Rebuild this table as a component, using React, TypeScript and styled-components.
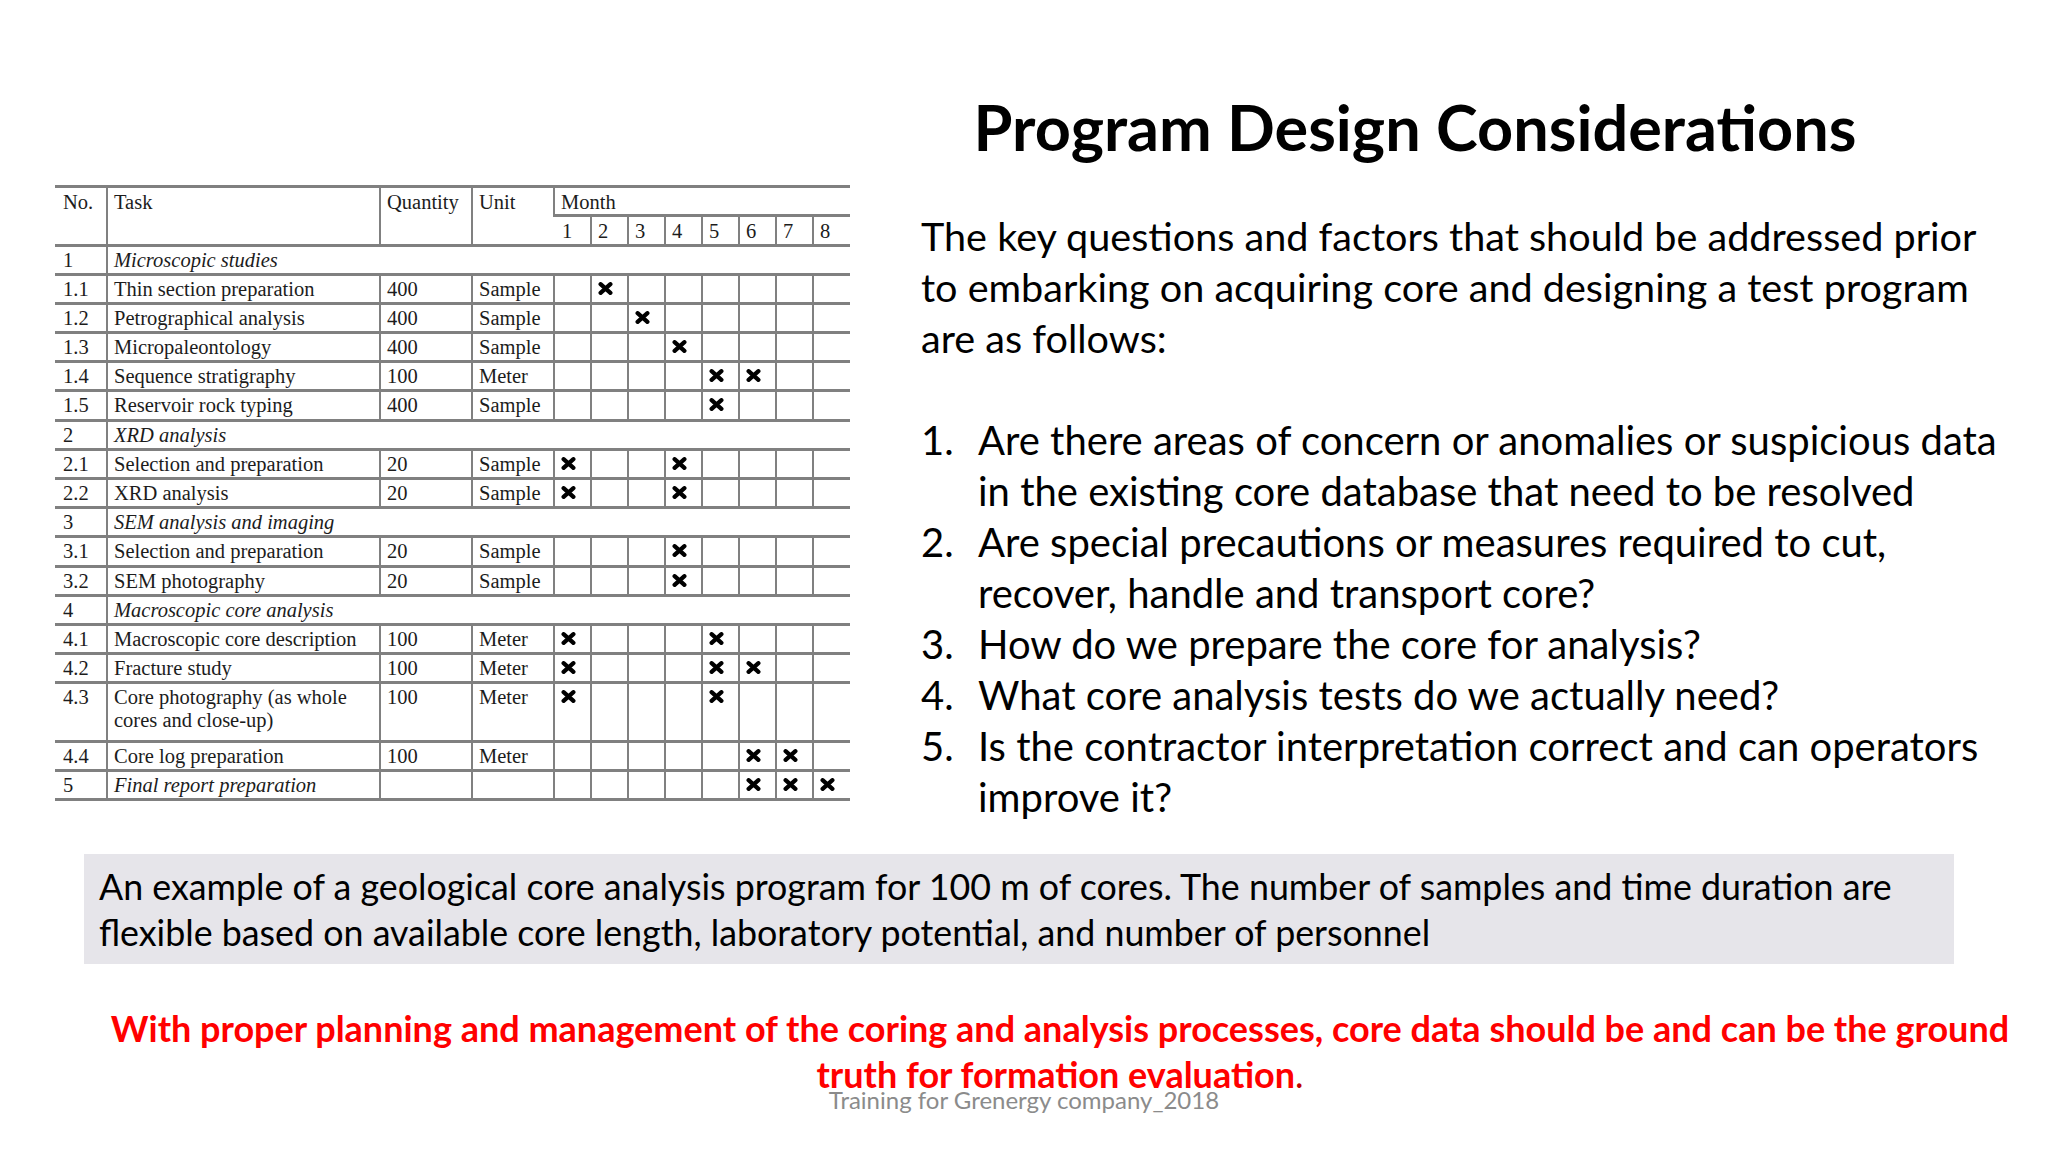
import React from "react";
import styled, { createGlobalStyle } from "styled-components";

const GlobalStyle = createGlobalStyle`
  html, body { margin: 0; padding: 0; background: #ffffff; }
  body { width: 2048px; height: 1152px; overflow: hidden; }
`;

const SANS = `"Lato", "Open Sans", "Noto Sans", sans-serif`;
const LINE = "#808080";

const Slide = styled.div`
  position: relative;
  width: 2048px;
  height: 1152px;
  background: #ffffff;
  display: flex;
  flex-direction: column;
  overflow: hidden;
  font-family: ${SANS};
  color: #000;
`;

const Top = styled.div`
  display: flex;
  align-items: flex-start;
`;

const TablePane = styled.div`
  margin-left: 55px;
  margin-top: 185px;
  width: 795px;
  flex: none;
`;

const TextPane = styled.div`
  margin-left: 71px;
  padding-top: 91px;
  width: 1110px;
  flex: none;
`;

const Title = styled.h1`
  margin: 0;
  width: 988px;
  text-align: center;
  font-family: ${SANS};
  font-weight: 700;
  font-size: 63px;
  line-height: 72px;
  white-space: nowrap;
`;

const Intro = styled.p`
  margin: 47px 0 0;
  font-size: 39.6px;
  line-height: 51px;
  white-space: nowrap;
`;

const List = styled.ol`
  margin: 52px 0 0;
  padding: 0;
  list-style: none;
`;

const Item = styled.li`
  display: flex;
  font-size: 40px;
  line-height: 51px;
  white-space: nowrap;
`;

const Num = styled.span`
  flex: none;
  width: 57px;
`;

const Caption = styled.div`
  margin: 31px 0 0 84px;
  width: 1870px;
  box-sizing: border-box;
  padding: 10px 15px 8px;
  background: #e6e5ea;
  font-size: 35.8px;
  line-height: 46px;
  white-space: nowrap;
`;

const Conclusion = styled.p`
  margin: 41px 0 0 72px;
  width: 1976px;
  text-align: center;
  color: #ff0000;
  font-weight: 700;
  font-size: 36px;
  line-height: 46px;
  white-space: nowrap;
`;

const Stop = styled.span`
  font-weight: 400;
  color: #c00000;
`;

const Footer = styled.div`
  position: absolute;
  left: 0;
  right: 0;
  bottom: 37px;
  text-align: center;
  color: #8b8b8b;
  font-size: 24px;
  line-height: 30px;
`;

/* ---------- table ---------- */

const Table = styled.table`
  border-collapse: collapse;
  table-layout: fixed;
  width: 795px;
  font-family: "Liberation Serif", "Times New Roman", serif;
  font-size: 20.5px;
  color: #1c1c1c;
`;

const cellBase = `
  border-top: 3px solid ${LINE};
  border-bottom: 3px solid ${LINE};
  border-left: 2px solid ${LINE};
  padding: 2px 0 0 6px;
  vertical-align: top;
  text-align: left;
  line-height: 23px;
  white-space: normal;
  &:first-child { border-left: none; padding-left: 8px; }
`;

const HeadCell = styled.th<{ $h?: number }>`
  ${cellBase}
  padding-top: 3px;
  font-weight: 400;
  height: ${(p) => p.$h ?? 28}px;
  box-sizing: border-box;
`;

const Cell = styled.td<{ $tall?: boolean; $italic?: boolean }>`
  ${cellBase}
  height: ${(p) => (p.$tall ? 58.4 : 29.2)}px;
  box-sizing: border-box;
  font-style: ${(p) => (p.$italic ? "italic" : "normal")};
`;

const MonthCell = styled(Cell)`
  padding-left: 6px;
`;

const Mark = styled.svg`
  display: block;
  width: 15px;
  height: 13px;
  margin-top: 4px;
`;

const XMark = () => (
  <Mark viewBox="0 0 15 13">
    <path
      d="M2.6 2.2 L12.4 10.8 M12.4 2.2 L2.6 10.8"
      stroke="#000"
      strokeWidth="4.2"
      strokeLinecap="round"
      fill="none"
    />
  </Mark>
);

type Row =
  | { kind: "section"; no: string; title: string }
  | {
      kind: "task";
      no: string;
      task: string;
      qty: string;
      unit: string;
      months: number[];
      tall?: boolean;
      italic?: boolean;
    };

const rows: Row[] = [
  { kind: "section", no: "1", title: "Microscopic studies" },
  { kind: "task", no: "1.1", task: "Thin section preparation", qty: "400", unit: "Sample", months: [2] },
  { kind: "task", no: "1.2", task: "Petrographical analysis", qty: "400", unit: "Sample", months: [3] },
  { kind: "task", no: "1.3", task: "Micropaleontology", qty: "400", unit: "Sample", months: [4] },
  { kind: "task", no: "1.4", task: "Sequence stratigraphy", qty: "100", unit: "Meter", months: [5, 6] },
  { kind: "task", no: "1.5", task: "Reservoir rock typing", qty: "400", unit: "Sample", months: [5] },
  { kind: "section", no: "2", title: "XRD analysis" },
  { kind: "task", no: "2.1", task: "Selection and preparation", qty: "20", unit: "Sample", months: [1, 4] },
  { kind: "task", no: "2.2", task: "XRD analysis", qty: "20", unit: "Sample", months: [1, 4] },
  { kind: "section", no: "3", title: "SEM analysis and imaging" },
  { kind: "task", no: "3.1", task: "Selection and preparation", qty: "20", unit: "Sample", months: [4] },
  { kind: "task", no: "3.2", task: "SEM photography", qty: "20", unit: "Sample", months: [4] },
  { kind: "section", no: "4", title: "Macroscopic core analysis" },
  { kind: "task", no: "4.1", task: "Macroscopic core description", qty: "100", unit: "Meter", months: [1, 5] },
  { kind: "task", no: "4.2", task: "Fracture study", qty: "100", unit: "Meter", months: [1, 5, 6] },
  {
    kind: "task",
    no: "4.3",
    task: "Core photography (as whole cores and close-up)",
    qty: "100",
    unit: "Meter",
    months: [1, 5],
    tall: true,
  },
  { kind: "task", no: "4.4", task: "Core log preparation", qty: "100", unit: "Meter", months: [6, 7] },
  { kind: "task", no: "5", task: "Final report preparation", qty: "", unit: "", months: [6, 7, 8], italic: true },
];

const MONTHS = [1, 2, 3, 4, 5, 6, 7, 8];

const PlanTable = () => (
  <Table>
    <colgroup>
      <col style={{ width: 52 }} />
      <col style={{ width: 273 }} />
      <col style={{ width: 92 }} />
      <col style={{ width: 82 }} />
      {MONTHS.map((m) => (
        <col key={m} style={{ width: 37 }} />
      ))}
    </colgroup>
    <thead>
      <tr>
        <HeadCell rowSpan={2}>No.</HeadCell>
        <HeadCell rowSpan={2}>Task</HeadCell>
        <HeadCell rowSpan={2}>Quantity</HeadCell>
        <HeadCell rowSpan={2}>Unit</HeadCell>
        <HeadCell colSpan={8} $h={28.5}>
          Month
        </HeadCell>
      </tr>
      <tr>
        {MONTHS.map((m) => (
          <HeadCell key={m} $h={29.5}>
            {m}
          </HeadCell>
        ))}
      </tr>
    </thead>
    <tbody>
      {rows.map((r) =>
        r.kind === "section" ? (
          <tr key={r.no}>
            <Cell>{r.no}</Cell>
            <Cell colSpan={11} $italic>
              {r.title}
            </Cell>
          </tr>
        ) : (
          <tr key={r.no}>
            <Cell $tall={r.tall}>{r.no}</Cell>
            <Cell $tall={r.tall} $italic={r.italic}>
              {r.task}
            </Cell>
            <Cell $tall={r.tall}>{r.qty}</Cell>
            <Cell $tall={r.tall}>{r.unit}</Cell>
            {MONTHS.map((m) => (
              <MonthCell key={m} $tall={r.tall}>
                {r.months.includes(m) && <XMark />}
              </MonthCell>
            ))}
          </tr>
        )
      )}
    </tbody>
  </Table>
);

const Lines = ({ lines }: { lines: string[] }) => (
  <>
    {lines.map((l, i) => (
      <React.Fragment key={i}>
        {i > 0 && <br />}
        {l}
      </React.Fragment>
    ))}
  </>
);

const questions: string[][] = [
  ["Are there areas of concern or anomalies or suspicious data", "in the existing core database that need to be resolved"],
  ["Are special precautions or measures required to cut,", "recover, handle and transport core?"],
  ["How do we prepare the core for analysis?"],
  ["What core analysis tests do we actually need?"],
  ["Is the contractor interpretation correct and can operators", "improve it?"],
];

export default function App() {
  return (
    <>
      <GlobalStyle />
      <Slide>
        <Top>
          <TablePane>
            <PlanTable />
          </TablePane>
          <TextPane>
            <Title>Program Design Considerations</Title>
            <Intro>
              <Lines
                lines={[
                  "The key questions and factors that should be addressed prior",
                  "to embarking on acquiring core and designing a test program",
                  "are as follows:",
                ]}
              />
            </Intro>
            <List>
              {questions.map((q, i) => (
                <Item key={i}>
                  <Num>{i + 1}.</Num>
                  <span>
                    <Lines lines={q} />
                  </span>
                </Item>
              ))}
            </List>
          </TextPane>
        </Top>
        <Caption>
          <Lines
            lines={[
              "An example of a geological core analysis program for 100 m of cores. The number of samples and time duration are",
              "flexible based on available core length, laboratory potential, and number of personnel",
            ]}
          />
        </Caption>
        <Conclusion>
          With proper planning and management of the coring and analysis processes, core data should be and can be the ground
          <br />
          truth for formation evaluation<Stop>.</Stop>
        </Conclusion>
        <Footer>Training for Grenergy company_2018</Footer>
      </Slide>
    </>
  );
}
